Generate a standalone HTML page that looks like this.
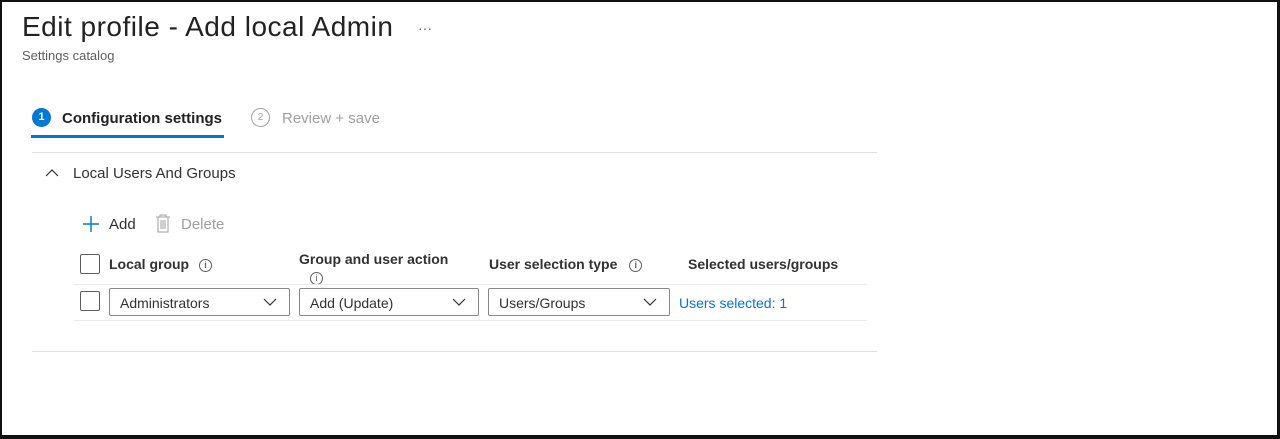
<!DOCTYPE html>
<html><head><style>
*{box-sizing:border-box;margin:0;padding:0}
body{width:1280px;height:439px;background:#fff;font-family:"Segoe UI","Liberation Sans",sans-serif;color:#323130;position:relative;overflow:hidden}
.frame{position:absolute;left:0;top:0;width:1280px;height:439px;border:2px solid #111;border-right-width:3px;border-bottom-width:4px}
.a{position:absolute;white-space:nowrap}
.cb{position:absolute;width:20px;height:20px;border:1px solid #605e5c;border-radius:2px}
.dd{position:absolute;height:28px;border:1px solid #8a8886;border-radius:2px;font-size:14px;padding:6px 10px 0;color:#323130}
.dd svg{position:absolute;right:12px;top:9px}
.hr{position:absolute;height:1px;background:#e1dfdd}
.info{display:inline-block;width:13px;height:13px;border:1px solid #605e5c;border-radius:50%;font-size:9px;line-height:11px;text-align:center;vertical-align:middle;color:#605e5c}
</style></head><body>
<div class="frame"></div>
<div class="a" style="left:22px;top:11px;font-size:28px;color:#222;letter-spacing:0.5px">Edit profile - Add local Admin</div>
<div class="a" style="left:418px;top:20px;font-size:14px;color:#605e5c">···</div>
<div class="a" style="left:22px;top:48px;font-size:13px;color:#605e5c">Settings catalog</div>
<div class="a" style="left:32px;top:108px;width:19px;height:19px;border-radius:50%;background:#0078d4;color:#fff;font-size:11px;font-weight:bold;text-align:center;line-height:19px">1</div>
<div class="a" style="left:62px;top:110px;font-size:15px;color:#222;font-weight:600">Configuration settings</div>
<div class="a" style="left:31px;top:135px;width:193px;height:3px;background:#0078d4"></div>
<div class="a" style="left:251px;top:108px;width:19px;height:19px;border-radius:50%;border:1px solid #a19f9d;color:#a19f9d;font-size:10px;text-align:center;line-height:17px">2</div>
<div class="a" style="left:282px;top:110px;font-size:15px;color:#a19f9d">Review + save</div>
<div class="hr" style="left:32px;top:152px;width:845px"></div>
<svg class="a" style="left:45px;top:168px" width="14" height="9"><path d="M1 8 L7 2 L13 8" fill="none" stroke="#323130" stroke-width="1.2"/></svg>
<div class="a" style="left:73px;top:165px;font-size:15px">Local Users And Groups</div>
<svg class="a" style="left:82px;top:215px" width="18" height="18"><path d="M9 1V17M1 9H17" stroke="#0078d4" stroke-width="1.4"/></svg>
<div class="a" style="left:109px;top:216px;font-size:15px">Add</div>
<svg class="a" style="left:155px;top:214px" width="16" height="19"><path d="M1 3H15M5 3V1H11V3M3 3V18H13V3M6 6V15M8 6V15M10 6V15" fill="none" stroke="#a19f9d" stroke-width="1"/></svg>
<div class="a" style="left:181px;top:216px;font-size:15px;color:#a19f9d">Delete</div>
<div class="cb" style="left:80px;top:254px"></div>
<div class="a" style="left:109px;top:256px;font-size:14px;font-weight:600">Local group <span class="info" style="margin-left:6px">i</span></div>
<div class="a" style="left:299px;top:251px;font-size:14px;font-weight:600">Group and user action</div>
<div class="a" style="left:310px;top:270px"><span class="info">i</span></div>
<div class="a" style="left:489px;top:256px;font-size:14px;font-weight:600">User selection type <span class="info" style="margin-left:8px">i</span></div>
<div class="a" style="left:688px;top:256px;font-size:14px;font-weight:600">Selected users/groups</div>
<div class="hr" style="left:74px;top:284px;width:793px;background:#edebe9"></div>
<div class="cb" style="left:80px;top:291px"></div>
<div class="dd" style="left:109px;top:288px;width:181px">Administrators<svg width="14" height="8"><path d="M1 1L7 7L13 1" fill="none" stroke="#323130" stroke-width="1.2"/></svg></div>
<div class="dd" style="left:299px;top:288px;width:180px">Add (Update)<svg width="14" height="8"><path d="M1 1L7 7L13 1" fill="none" stroke="#323130" stroke-width="1.2"/></svg></div>
<div class="dd" style="left:488px;top:288px;width:182px">Users/Groups<svg width="14" height="8"><path d="M1 1L7 7L13 1" fill="none" stroke="#323130" stroke-width="1.2"/></svg></div>
<div class="a" style="left:679px;top:295px;font-size:14px;color:#0078d4">Users selected: 1</div>
<div class="hr" style="left:74px;top:320px;width:793px;background:#edebe9"></div>
<div class="hr" style="left:32px;top:351px;width:845px"></div>
</body></html>
